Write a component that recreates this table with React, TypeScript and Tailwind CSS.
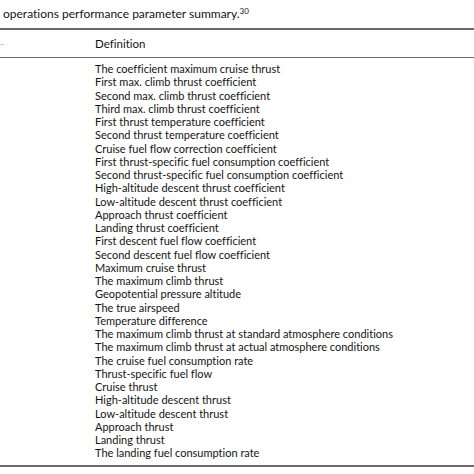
const rows = [
  "The coefficient maximum cruise thrust",
  "First max. climb thrust coefficient",
  "Second max. climb thrust coefficient",
  "Third max. climb thrust coefficient",
  "First thrust temperature coefficient",
  "Second thrust temperature coefficient",
  "Cruise fuel flow correction coefficient",
  "First thrust-specific fuel consumption coefficient",
  "Second thrust-specific fuel consumption coefficient",
  "High-altitude descent thrust coefficient",
  "Low-altitude descent thrust coefficient",
  "Approach thrust coefficient",
  "Landing thrust coefficient",
  "First descent fuel flow coefficient",
  "Second descent fuel flow coefficient",
  "Maximum cruise thrust",
  "The maximum climb thrust",
  "Geopotential pressure altitude",
  "The true airspeed",
  "Temperature difference",
  "The maximum climb thrust at standard atmosphere conditions",
  "The maximum climb thrust at actual atmosphere conditions",
  "The cruise fuel consumption rate",
  "Thrust-specific fuel flow",
  "Cruise thrust",
  "High-altitude descent thrust",
  "Low-altitude descent thrust",
  "Approach thrust",
  "Landing thrust",
  "The landing fuel consumption rate",
];

export default function App() {
  return (
    <div className="w-[474px] h-[474px] overflow-hidden bg-white text-[#141414] font-['Lato',sans-serif] text-[11px] leading-[13.25px] [font-variant-ligatures:none]">
      {/* Caption */}
      <p className="pt-[6px] pl-[3px] h-[28px] text-[12px] leading-[16px]">
        operations performance parameter summary.<sup className="text-[8px]">30</sup>
      </p>

      <div className="border-t-2 border-[#6b6b6b]" />

      {/* Header */}
      <div className="flex h-[28px] items-center border-b border-[#6b6b6b] text-[11.5px]">
        <span className="w-[95px] text-[#bbb]">-</span>
        <span>Definition</span>
      </div>

      {/* Body */}
      <div className="flex pt-[4px] pb-[5px] border-b-2 border-[#6b6b6b]">
        <div className="w-[95px] shrink-0" />
        <div className="flex flex-col">
          {rows.map((r) => (
            <div key={r} className="h-[13.25px] whitespace-nowrap">
              {r}
            </div>
          ))}
        </div>
      </div>
    </div>
  );
}
